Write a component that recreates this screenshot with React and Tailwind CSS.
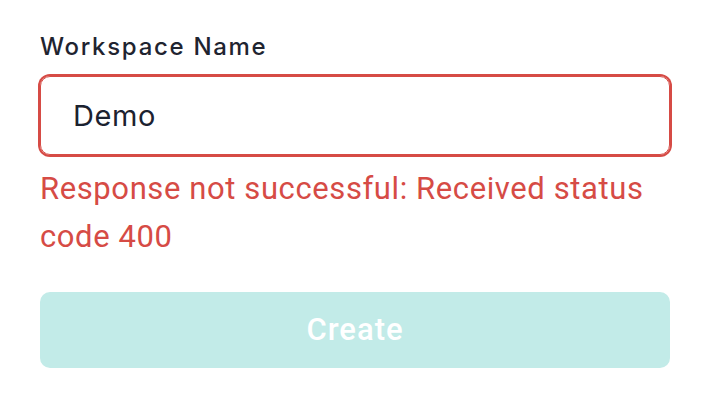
import React from 'react';

const App = () => {
    return (
        <div className="w-[710px] h-[410px] bg-white px-10 pt-[31px]">
            <label className="block text-[24px] leading-[32px] font-medium tracking-[1.7px] text-[#1f2430] font-['Inter',sans-serif]">
                Workspace Name
            </label>
            <input
                type="text"
                defaultValue="Demo"
                className="mt-[13px] block w-full h-[79px] rounded-[10px] border border-[#d64b45] shadow-[0_0_0_2px_#d64b45] pl-8 pr-4 text-[29px] tracking-[0.6px] text-[#1c2230] font-['Inter',sans-serif] outline-none"
            />
            <p className="mt-[10px] text-[31px] leading-[48px] tracking-[0.6px] text-[#d64b45] font-['Roboto',sans-serif]">
                Response not successful: Received status code 400
            </p>
            <button
                disabled
                className="mt-[31px] block w-full h-[76px] rounded-[10px] bg-[#c2ebe8] text-white text-[31px] font-medium tracking-[1px] font-['Roboto',sans-serif]"
            >
                Create
            </button>
        </div>
    );
};

export default App;
